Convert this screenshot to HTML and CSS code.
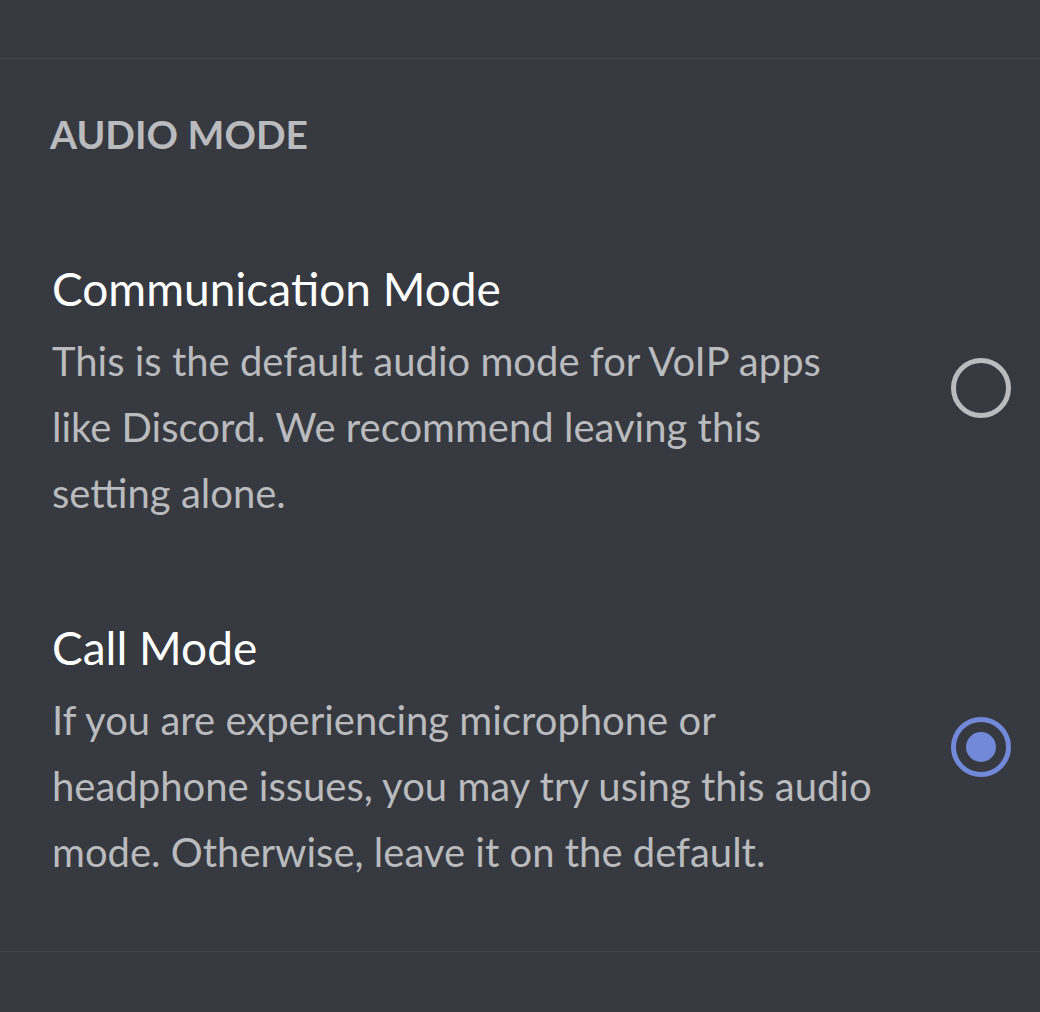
FILE: index.html
```html
<!DOCTYPE html>
<html lang="en">
  <head>
    <meta charset="UTF-8" />
    <meta name="viewport" content="width=device-width, initial-scale=1.0" />
    <title>Audio Mode</title>
    <link rel="stylesheet" href="styles.css">
  </head>
  <body>
    <div class="page">
      <div class="top"></div>

      <!-- audio mode section -->
      <div class="section">
        <h2 class="header">AUDIO MODE</h2>

        <div class="option">
          <div class="text">
            <div class="title">Communication Mode</div>
            <div class="desc">This is the default audio mode for VoIP apps like Discord. We recommend leaving this setting alone.</div>
          </div>
          <div class="radio"></div>
        </div>

        <div class="option">
          <div class="text">
            <div class="title">Call Mode</div>
            <div class="desc">If you are experiencing microphone or headphone issues, you may try using this audio mode. Otherwise, leave it on the default.</div>
          </div>
          <div class="radio checked"></div>
        </div>
      </div>
    </div>
  </body>
</html>
```

FILE: styles.css
```css
*,
*::before,
*::after {
  margin: 0;
  padding: 0;
  box-sizing: border-box;
}

body {
  background: #36393f;
  font-family: Lato, "Noto Sans", sans-serif;
  height: 100vh;
}

.top {
  height: 59px;
  border-bottom: 1px solid #42454b;
}

/* ------------------------------ section ------------------------------ */
.section {
  padding: 50px 29px 66px 50px;
  border-bottom: 1px solid #42454b;
}

.header {
  font-size: 39px;
  font-weight: 700;
  color: #b9bbbe;
  line-height: 50px;
}

.option {
  display: flex;
  align-items: center;
  justify-content: space-between;
  margin-top: 99px;
}

.option + .option {
  margin-top: 91px;
}

.text {
  width: 834px;
  padding-left: 2px;
}

.title {
  font-size: 46px;
  color: #ffffff;
  line-height: 62px;
  margin-bottom: 8px;
}

.desc {
  font-size: 40px;
  color: #b9bbbe;
  line-height: 66px;
}

/* ------------------------------ radio ------------------------------ */
.radio {
  width: 60px;
  height: 60px;
  border-radius: 50%;
  border: 5px solid #b9bbbe;
  display: flex;
  justify-content: center;
  align-items: center;
  margin-bottom: 9px;
}

.radio.checked {
  border-color: #7289da;
}

.radio.checked::after {
  content: "";
  width: 30px;
  height: 30px;
  border-radius: 50%;
  background: #7289da;
}
```
